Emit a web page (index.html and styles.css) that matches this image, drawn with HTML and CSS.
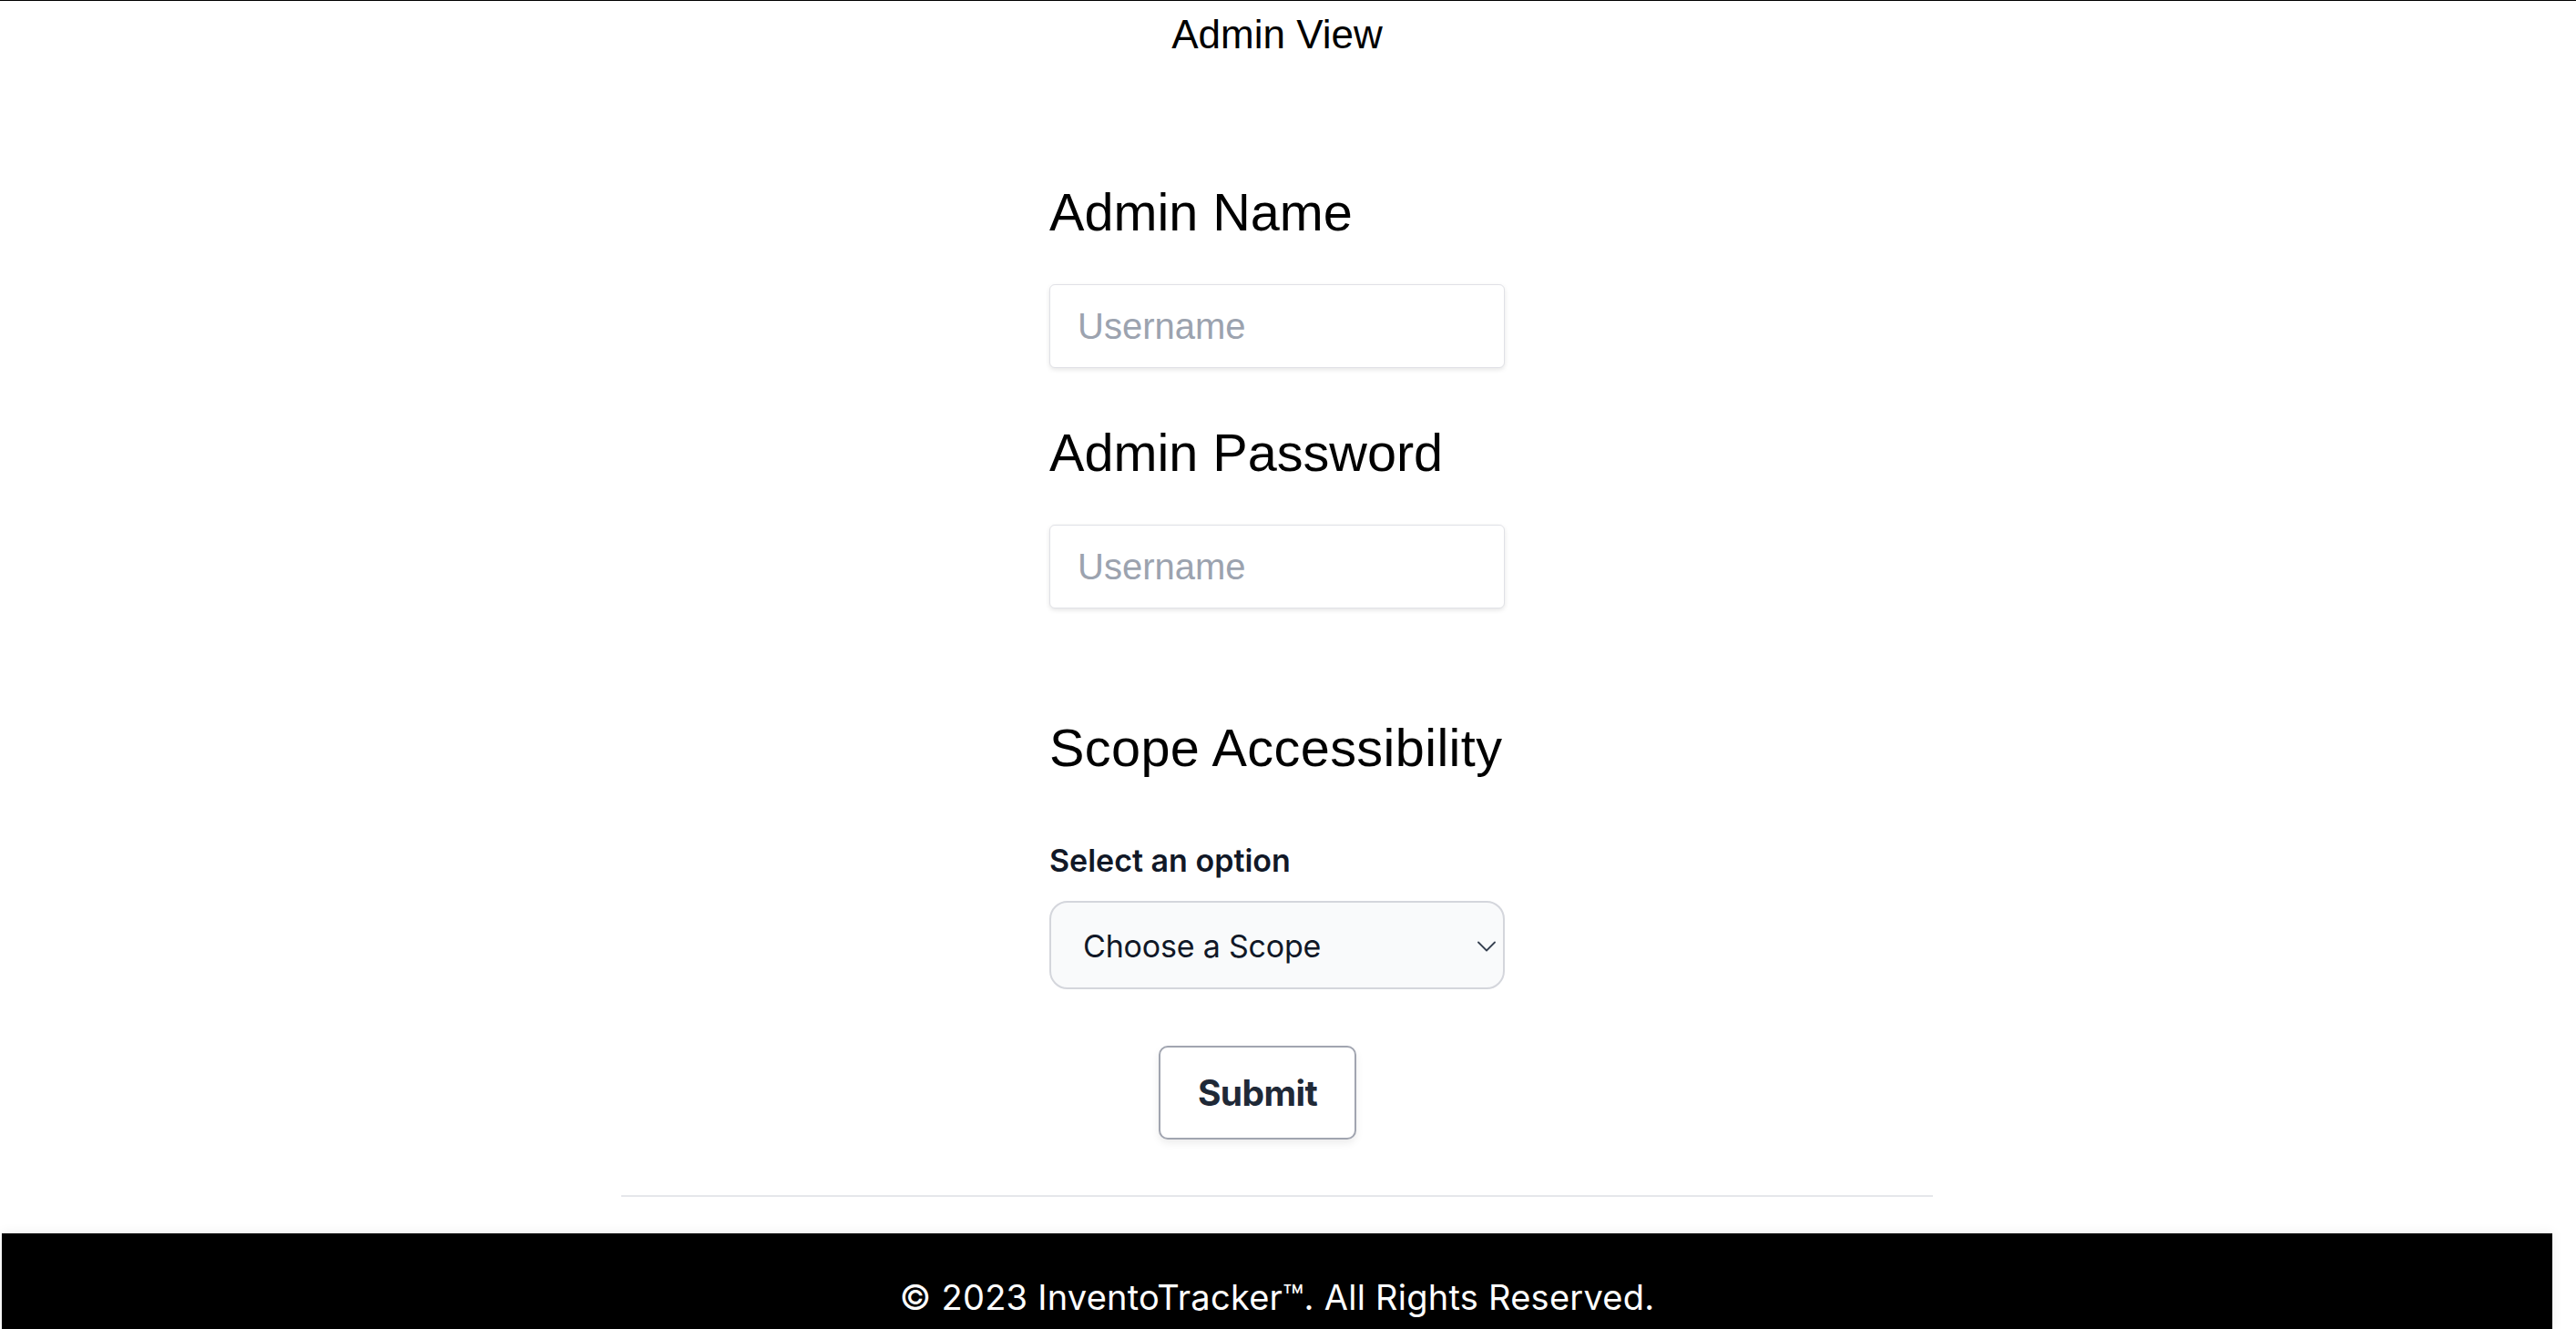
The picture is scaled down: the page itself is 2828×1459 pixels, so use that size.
FILE: index.html
```html
<!DOCTYPE html>
<html lang="en">
<head>
<meta charset="utf-8">
<title>Admin View</title>
<link rel="stylesheet" href="styles.css">
</head>
<body>
<div class="page">
  <header class="topbar">
    <h1 class="page-title">Admin View</h1>
  </header>
  <main>
    <form class="admin-form">
      <h2 class="field-title">Admin Name</h2>
      <input class="text-input" type="text" placeholder="Username">
      <h2 class="field-title field-title--spaced">Admin Password</h2>
      <input class="text-input" type="text" placeholder="Username">
      <h2 class="field-title field-title--section">Scope Accessibility</h2>
      <label class="select-label" for="scope">Select an option</label>
      <div class="select-wrap">
        <select id="scope" class="scope-select">
          <option>Choose a Scope</option>
        </select>
        <svg class="chevron" width="20" height="12" viewBox="0 0 20 12" aria-hidden="true">
          <path d="M1 1.5 L10 10.5 L19 1.5" fill="none" stroke="#374151" stroke-width="1.8" stroke-linecap="round" stroke-linejoin="round"/>
        </svg>
      </div>
      <button class="submit-btn" type="button">Submit</button>
    </form>
    <hr class="divider">
  </main>
  <footer class="site-footer">
    <p class="footer-text">© 2023 InventoTracker™. All Rights Reserved.</p>
  </footer>
</div>
</body>
</html>
```

FILE: styles.css
```css
html, body {
  margin: 0;
  padding: 0;
  background: #ffffff;
}

body {
  border-top: 1px solid #000000;
  font-family: "Liberation Sans", Arial, sans-serif;
  color: #000000;
  overflow: hidden;
}

.page {
  width: 2804px;
}

.topbar {
  padding-top: 12px;
  text-align: center;
}

.page-title {
  margin: 0;
  font-size: 44px;
  line-height: 50px;
  font-weight: 400;
}

.admin-form {
  width: 500px;
  margin: 137px auto 0;
  display: flex;
  flex-direction: column;
  align-items: flex-start;
}

.field-title {
  margin: 0 0 46px;
  font-size: 57.6px;
  line-height: 66px;
  font-weight: 400;
  white-space: nowrap;
}

.field-title--spaced {
  margin-top: 60px;
}

.field-title--section {
  margin-top: 120px;
  margin-bottom: 71px;
  letter-spacing: 0.4px;
}

.text-input {
  box-sizing: border-box;
  width: 500px;
  height: 92px;
  margin: 0;
  padding: 0 30px;
  border: 1px solid #e0e1e6;
  border-radius: 6px;
  background: #ffffff;
  box-shadow: 0 2px 5px rgba(0, 0, 0, 0.1);
  font-family: "Liberation Sans", Arial, sans-serif;
  font-size: 40px;
  color: #111827;
  outline: none;
}

.text-input::placeholder {
  color: #9ca3af;
}

.select-label {
  display: block;
  font-family: Inter, "Noto Sans", sans-serif;
  font-size: 34px;
  line-height: 40px;
  font-weight: 600;
  letter-spacing: 0;
  color: #111827;
  margin-bottom: 24px;
}

.select-wrap {
  position: relative;
  width: 500px;
}

.scope-select {
  -webkit-appearance: none;
  appearance: none;
  box-sizing: border-box;
  width: 500px;
  height: 97px;
  margin: 0;
  padding: 2px 60px 0 35px;
  border: 2px solid #d4d6dc;
  border-radius: 20px;
  background: #f9fafb;
  font-family: Inter, "Noto Sans", sans-serif;
  font-size: 34px;
  letter-spacing: -0.2px;
  color: #111827;
  outline: none;
}

.chevron {
  position: absolute;
  right: 10px;
  top: 44px;
  pointer-events: none;
}

.submit-btn {
  box-sizing: border-box;
  width: 217px;
  height: 103px;
  margin: 62px 0 0 120px;
  padding: 0;
  border: 2px solid #a1a5b0;
  border-radius: 10px;
  background: #ffffff;
  box-shadow: 0 4px 8px rgba(0, 0, 0, 0.08);
  font-family: Inter, "Noto Sans", sans-serif;
  font-size: 39px;
  font-weight: 700;
  letter-spacing: -0.6px;
  color: #1f2937;
}

.divider {
  width: 1440px;
  height: 2px;
  margin: 61px auto 0;
  border: 0;
  background: #e5e7eb;
}

.site-footer {
  margin: 40px 2px 0;
  padding: 47px 0 12px;
  background: #000000;
  box-shadow: 0 0 12px rgba(0, 0, 0, 0.08);
  text-align: center;
}

.footer-text {
  margin: 0;
  font-family: Inter, "Noto Sans", sans-serif;
  font-size: 38px;
  line-height: 46px;
  letter-spacing: 0.25px;
  color: #ffffff;
}
```
